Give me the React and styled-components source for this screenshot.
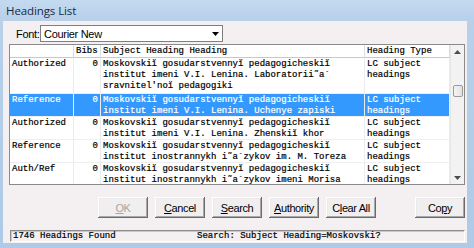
import React from "react";
import styled, { createGlobalStyle } from "styled-components";

const Global = createGlobalStyle`
  html, body { margin: 0; padding: 0; width: 474px; height: 248px; overflow: hidden; background: #b9d1ea; }
  * { box-sizing: border-box; }
`;

const Window = styled.div`
  width: 474px;
  height: 248px;
  display: flex;
  flex-direction: column;
  background: linear-gradient(#c4daef, #b8d0ea 20px, #aecae6);
  padding-bottom: 5px;
`;

const TitleBar = styled.div`
  height: 21px;
  flex: none;
  display: flex;
  align-items: center;
  padding-left: 6px;
  font-family: "Open Sans", "Liberation Sans", sans-serif;
  font-size: 11.5px;
  color: #1a2b3f;
  letter-spacing: -0.1px;
`;

const Body = styled.div`
  flex: 1;
  margin: 0 7px 0 3px;
  background: #f4f0f2;
  display: flex;
  flex-direction: column;
  padding: 0 2px 1px 6px;
  min-height: 0;
`;

const FontRow = styled.div`
  margin-top: 4px;
  height: 17px;
  display: flex;
  align-items: center;
  padding-left: 7px;
  font-family: "Liberation Sans", sans-serif;
  font-size: 11px;
  letter-spacing: -0.3px;
  color: #000;
`;

const Label = styled.span`
  width: 24px;
`;

const Combo = styled.div`
  width: 183px;
  height: 17px;
  border: 1px solid #7f7f7f;
  background: #fff;
  display: flex;
  align-items: center;
  padding-left: 3px;
  justify-content: space-between;
`;

const ComboArrow = styled.div`
  width: 14px;
  height: 100%;
  display: flex;
  align-items: center;
  justify-content: center;
`;

const Frame = styled.div`
  margin-top: 2px;
  height: 141px;
  border: 1px solid #8a8a8a;
  background: #fff;
  display: flex;
  overflow: hidden;
`;

const ListArea = styled.div`
  flex: 1;
  overflow: hidden;
  font-family: "Liberation Mono", "Courier New", monospace;
  font-size: 9px;
  color: #000;
  -webkit-text-stroke: 0.2px currentColor;
`;

const Grid = styled.div`
  display: grid;
  grid-template-columns: 64px 27px 264px 1fr;
`;

const HeadCell = styled.div`
  height: 13px;
  line-height: 12px;
  padding: 0 2px;
  border-right: 1px solid #dcdcdc;
  border-bottom: 1px solid #c8c8c8;
  white-space: pre;
  overflow: hidden;
`;

const Cell = styled.div`
  height: ${(p) => p.$h}px;
  padding: 1px 2px 0 2px;
  line-height: 11px;
  border-right: 1px solid #ececec;
  border-bottom: 1px solid #efefef;
  text-align: ${(p) => (p.$right ? "right" : "left")};
  white-space: pre;
  overflow: hidden;
  background: ${(p) => (p.$sel ? "#3399ff" : "#fff")};
  color: ${(p) => (p.$sel ? "#fff" : "#000")};
`;

const Line = styled.div`
  height: 11px;
`;

const Scrollbar = styled.div`
  width: 14px;
  flex: none;
  background: #f2f2f2;
  border-left: 1px solid #e6e6e6;
  display: flex;
  flex-direction: column;
  align-items: center;
`;

const ScrollArrow = styled.div`
  height: 13px;
  width: 100%;
  display: flex;
  align-items: center;
  justify-content: center;
  flex: none;
`;

const Track = styled.div`
  flex: 1;
  width: 100%;
  display: flex;
  flex-direction: column;
  align-items: center;
`;

const Thumb = styled.div`
  margin-top: ${(p) => p.$offset}px;
  width: 10px;
  height: 12px;
  border: 1px solid #9a9a9a;
  border-radius: 2px;
  background: linear-gradient(90deg, #f4f4f4, #e2e2e2);
`;

const ButtonRow = styled.div`
  margin-top: 12px;
  height: 21px;
  display: flex;
  gap: 7px;
  padding-left: 89px;
`;

const Button = styled.div`
  width: 50px;
  height: 21px;
  display: flex;
  align-items: center;
  justify-content: center;
  background: #f1eef0;
  box-shadow: inset -1px -1px #6b6b6b, inset 1px 1px #ffffff, inset -2px -2px #a8a8a8, inset 2px 2px #ece9eb;
  font-family: "Liberation Sans", sans-serif;
  font-size: 11px;
  letter-spacing: -0.4px;
  color: ${(p) => (p.$disabled ? "#a5a5a5" : "#000")};
  margin-left: ${(p) => (p.$push ? "auto" : "0")};
  u { text-decoration-thickness: 1px; text-underline-offset: 1px; }
`;

const Status = styled.div`
  margin-top: 12px;
  margin-left: 1px;
  height: 12px;
  display: grid;
  grid-template-columns: 184px 1fr;
  align-items: center;
  border-top: 1px solid #8e8e8e;
  border-left: 1px solid #8e8e8e;
  border-right: 1px solid #ffffff;
  border-bottom: 1px solid #ffffff;
  box-shadow: inset 1px 1px #c8c8c8;
  padding-left: 2px;
  font-family: "Liberation Mono", "Courier New", monospace;
  font-size: 9px;
  color: #000;
  -webkit-text-stroke: 0.2px currentColor;
  white-space: pre;
  line-height: 10px;
`;

const rows = [
  {
    type: "Authorized",
    h: 36,
    heading: [
      "Moskovski\u012D gosudarstvenny\u012D pedagogicheski\u012D",
      "institut imeni V.I. Lenina. Laboratorii\u02DCa`",
      "sravnitel\u02B9no\u012D pedagogiki",
    ],
  },
  {
    type: "Reference",
    sel: true,
    h: 23,
    heading: [
      "Moskovski\u012D gosudarstvenny\u012D pedagogicheski\u012D",
      "institut imeni V.I. Lenina. Uchenye zapiski",
    ],
  },
  {
    type: "Authorized",
    h: 23,
    heading: [
      "Moskovski\u012D gosudarstvenny\u012D pedagogicheski\u012D",
      "institut imeni V.I. Lenina. Zhenski\u012D khor",
    ],
  },
  {
    type: "Reference",
    h: 23,
    heading: [
      "Moskovski\u012D gosudarstvenny\u012D pedagogicheski\u012D",
      "institut inostrannykh i\u02DCa`zykov im. M. Toreza",
    ],
  },
  {
    type: "Auth/Ref",
    h: 23,
    heading: [
      "Moskovski\u012D gosudarstvenny\u012D pedagogicheski\u012D",
      "institut inostrannykh i\u02DCa`zykov imeni Morisa",
    ],
  },
];

const Caret = ({ up }) => (
  <svg width="7" height="4" viewBox="0 0 7 4">
    <path d={up ? "M0 4 L3.5 0 L7 4 Z" : "M0 0 L3.5 4 L7 0 Z"} fill="#4d4d4d" />
  </svg>
);

export default function App() {
  return (
    <>
      <Global />
      <Window>
        <TitleBar>Headings List</TitleBar>
        <Body>
          <FontRow>
            <Label>Font:</Label>
            <Combo>
              <span>Courier New</span>
              <ComboArrow>
                <svg width="7" height="4" viewBox="0 0 7 4">
                  <path d="M0 0 L3.5 4 L7 0 Z" fill="#000" />
                </svg>
              </ComboArrow>
            </Combo>
          </FontRow>
          <Frame>
            <ListArea>
              <Grid>
                <HeadCell />
                <HeadCell>Bibs</HeadCell>
                <HeadCell>Subject Heading Heading</HeadCell>
                <HeadCell>Heading Type</HeadCell>
                {rows.map((r, i) => (
                  <React.Fragment key={i}>
                    <Cell $sel={r.sel} $h={r.h}>{r.type}</Cell>
                    <Cell $sel={r.sel} $h={r.h} $right>0</Cell>
                    <Cell $sel={r.sel} $h={r.h}>
                      {r.heading.map((l, j) => (
                        <Line key={j}>{l}</Line>
                      ))}
                    </Cell>
                    <Cell $sel={r.sel} $h={r.h}>
                      <Line>LC subject</Line>
                      <Line>headings</Line>
                    </Cell>
                  </React.Fragment>
                ))}
              </Grid>
            </ListArea>
            <Scrollbar>
              <ScrollArrow>
                <Caret up />
              </ScrollArrow>
              <Track>
                <Thumb $offset={27} />
              </Track>
              <ScrollArrow>
                <Caret />
              </ScrollArrow>
            </Scrollbar>
          </Frame>
          <ButtonRow>
            <Button $disabled>
              <u>O</u>K
            </Button>
            <Button>
              <u>C</u>ancel
            </Button>
            <Button>
              <u>S</u>earch
            </Button>
            <Button>
              <u>A</u>uthority
            </Button>
            <Button>
              C<u>l</u>ear All
            </Button>
            <Button $push>
              Co<u>p</u>y
            </Button>
          </ButtonRow>
          <Status>
            <span>1746 Headings Found</span>
            <span>Search: Subject Heading=Moskovski?</span>
          </Status>
        </Body>
      </Window>
    </>
  );
}
